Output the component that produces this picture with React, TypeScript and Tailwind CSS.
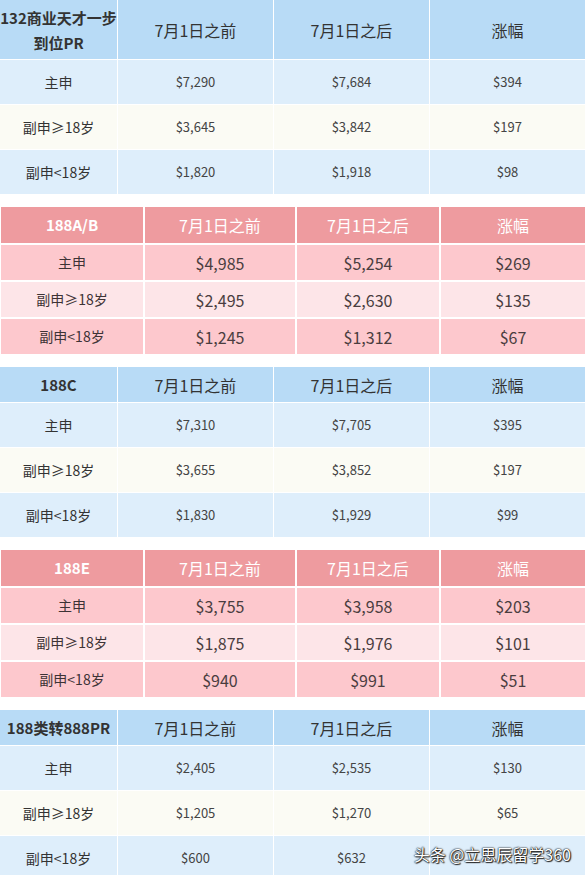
import React from 'react'

type Row = { label: string; before: string; after: string; rise: string }

interface FeeTable {
  title: string
  tone: 'blue' | 'pink'
  tall?: boolean
  rows: Row[]
}

const labels = ['主申', '副申≥18岁', '副申<18岁']
const heads = ['7月1日之前', '7月1日之后', '涨幅']

const mk = (vals: string[][]): Row[] =>
  vals.map((v, i) => ({ label: labels[i], before: v[0], after: v[1], rise: v[2] }))

const tables: FeeTable[] = [
  {
    title: '132商业天才一步\n到位PR',
    tone: 'blue',
    tall: true,
    rows: mk([
      ['$7,290', '$7,684', '$394'],
      ['$3,645', '$3,842', '$197'],
      ['$1,820', '$1,918', '$98'],
    ]),
  },
  {
    title: '188A/B',
    tone: 'pink',
    rows: mk([
      ['$4,985', '$5,254', '$269'],
      ['$2,495', '$2,630', '$135'],
      ['$1,245', '$1,312', '$67'],
    ]),
  },
  {
    title: '188C',
    tone: 'blue',
    rows: mk([
      ['$7,310', '$7,705', '$395'],
      ['$3,655', '$3,852', '$197'],
      ['$1,830', '$1,929', '$99'],
    ]),
  },
  {
    title: '188E',
    tone: 'pink',
    rows: mk([
      ['$3,755', '$3,958', '$203'],
      ['$1,875', '$1,976', '$101'],
      ['$940', '$991', '$51'],
    ]),
  },
  {
    title: '188类转888PR',
    tone: 'blue',
    rows: mk([
      ['$2,405', '$2,535', '$130'],
      ['$1,205', '$1,270', '$65'],
      ['$600', '$632', ''], // hidden under the watermark
    ]),
  },
]

function BlueTable({ t }: { t: FeeTable }) {
  const headH = t.tall ? 'h-[59px]' : 'h-[35px]'
  return (
    <div className="grid grid-cols-[117px_155px_155px_1fr] gap-px bg-white">
      <div
        className={`flex items-center justify-center whitespace-pre-line bg-[#b8dbf6] text-center text-[15px] font-bold leading-[25px] text-[#333] ${headH}`}
      >
        {t.title}
      </div>
      {heads.map((h) => (
        <div
          key={h}
          className={`flex items-center justify-center bg-[#b8dbf6] text-[16px] text-[#333] ${headH}`}
        >
          {h}
        </div>
      ))}
      {t.rows.map((r, i) => {
        const bg = i % 2 === 1 ? 'bg-[#fbfbf4]' : 'bg-[#deeefb]'
        return (
          <React.Fragment key={r.label}>
            <div className={`flex h-[44px] items-center justify-center text-[14px] text-[#333] ${bg}`}>
              {r.label}
            </div>
            {[r.before, r.after, r.rise].map((v, j) => (
              <div
                key={j}
                className={`flex h-[44px] items-center justify-center text-[13px] text-[#444] ${bg}`}
              >
                {v}
              </div>
            ))}
          </React.Fragment>
        )
      })}
    </div>
  )
}

function PinkTable({ t }: { t: FeeTable }) {
  return (
    <div className="grid grid-cols-[142px_150px_142px_1fr] gap-[2px] bg-white pl-px">
      <div className="flex h-[36px] items-center justify-center bg-[#ee9b9f] text-[15px] font-bold text-white">
        {t.title}
      </div>
      {heads.map((h) => (
        <div
          key={h}
          className="flex h-[36px] items-center justify-center bg-[#ee9b9f] text-[16px] text-white"
        >
          {h}
        </div>
      ))}
      {t.rows.map((r, i) => {
        const bg = i % 2 === 1 ? 'bg-[#fde5e8]' : 'bg-[#fdc8cd]'
        return (
          <React.Fragment key={r.label}>
            <div className={`flex h-[35px] items-center justify-center text-[14px] text-[#3d3335] ${bg}`}>
              {r.label}
            </div>
            {[r.before, r.after, r.rise].map((v, j) => (
              <div
                key={j}
                className={`flex h-[35px] items-center justify-center text-[16px] text-[#4a3d40] ${bg}`}
              >
                {v}
              </div>
            ))}
          </React.Fragment>
        )
      })}
    </div>
  )
}

export default function App() {
  return (
    <div
      className="relative h-[875px] w-[585px] overflow-hidden bg-white"
      style={{ fontFamily: '"Noto Sans CJK SC", "Noto Sans", sans-serif' }}
    >
      <div className="flex flex-col gap-[13px]">
        {tables.map((t) =>
          t.tone === 'blue' ? <BlueTable key={t.title} t={t} /> : <PinkTable key={t.title} t={t} />
        )}
      </div>

      {/* watermark */}
      <div className="absolute bottom-[9px] right-[14px] text-[16px] text-white [text-shadow:0_0_2px_#000,0_0_1px_#000,1px_1px_1px_#333]">
        头条 @立思辰留学360
      </div>
    </div>
  )
}
